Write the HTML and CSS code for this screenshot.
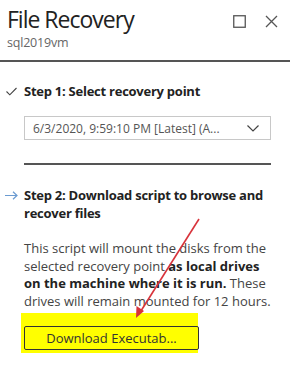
FILE: index.html
```html
<!DOCTYPE html>
<html>
<head>
  <title>File Recovery</title>
  <link rel="stylesheet" href="styles.css">
</head>
<body>
  <div class="blade-header">
    <div class="titles">
      <h1>File Recovery</h1>
      <div class="subtitle">sql2019vm</div>
    </div>
    <div class="blade-actions">
      <svg width="13" height="13" viewBox="0 0 13 13"><rect x="0.75" y="0.75" width="11.5" height="11.5" fill="none" stroke="#555" stroke-width="1.3"/></svg>
      <svg width="13" height="13" viewBox="0 0 13 13"><path d="M1 1 L12 12 M12 1 L1 12" stroke="#555" stroke-width="1.3" fill="none"/></svg>
    </div>
  </div>

  <div class="step step-done">
    <div class="step-title">
      <svg class="step-icon" width="11" height="9" viewBox="0 0 11 9"><path d="M0.5 4.5 L3.8 7.8 L10.5 1" stroke="#444" stroke-width="1.1" fill="none"/></svg>
      <span>Step 1: Select recovery point</span>
    </div>
    <div class="step-body">
      <div class="dropdown">
        <span>6/3/2020, 9:59:10 PM [Latest] (A...</span>
        <svg width="12" height="7" viewBox="0 0 12 7"><path d="M0.5 0.5 L6 6 L11.5 0.5" stroke="#444" stroke-width="1.2" fill="none"/></svg>
      </div>
      <div class="divider"></div>
    </div>
  </div>

  <div class="step step-current">
    <div class="step-title">
      <svg class="step-icon" width="13" height="9" viewBox="0 0 13 9"><path d="M0 4.5 H12 M8 0.8 L12 4.5 L8 8.2" stroke="#6b9bd1" stroke-width="1.2" fill="none"/></svg>
      <span>Step 2: Download script to browse and recover files</span>
    </div>
    <div class="step-body">
      <p class="info">This script will mount the disks from the selected recovery point <b>as local drives</b> <b>on the machine where it is run.</b> These drives will remain mounted for 12 hours.</p>
      <div class="highlight">
        <button class="btn">Download Executab...</button>
      </div>
    </div>
  </div>

  <svg class="callout-arrow" width="290" height="367" viewBox="0 0 290 367">
    <path d="M199 219 L139 314" stroke="#d8333b" stroke-width="1.6" fill="none"/>
    <path d="M136 318 L136.5 306 L144 311 Z" fill="#d8333b"/>
  </svg>
</body>
</html>
```

FILE: styles.css
```css
body {
  margin: 0;
  width: 290px;
  font-family: "Open Sans", "Noto Sans", sans-serif;
  color: #333;
  background: #fff;
  position: relative;
}

.blade-header {
  display: flex;
  justify-content: space-between;
  padding: 3px 12px 0 7px;
  height: 57px;
  border-bottom: 2px solid #555;
}

.blade-header h1 {
  margin: 0;
  font-size: 23px;
  font-weight: 400;
  letter-spacing: -1px;
  line-height: 32px;
  color: #222;
}

.subtitle {
  font-size: 12.5px;
  color: #666;
  line-height: 14px;
  margin-top: 1px;
  letter-spacing: -0.2px;
}

.blade-actions {
  display: flex;
  gap: 19px;
  padding-top: 12px;
}

.step {
  padding: 0 19px 0 24px;
}

.step-title {
  position: relative;
  font-weight: 700;
  font-size: 13px;
  letter-spacing: -0.25px;
  line-height: 18px;
  color: #222;
}

.step-icon {
  position: absolute;
  left: -18px;
  top: 5px;
}

.step-current .step-icon {
  left: -19px;
}

.step-done {
  padding-top: 20px;
}

.dropdown {
  margin-top: 16px;
  height: 22px;
  border: 1px solid #c8c8c8;
  display: flex;
  align-items: center;
  justify-content: space-between;
  padding: 0 11px 0 8px;
  font-size: 12px;
  color: #555;
}

.divider {
  margin-top: 23px;
  height: 2px;
  background: #555;
}

.step-current {
  padding-top: 21px;
}

.info {
  margin: 18px 0 0;
  font-size: 13px;
  line-height: 17.5px;
  color: #444;
}

.info b {
  color: #222;
}

.highlight {
  margin: 3px 0 0 -3px;
  width: 174px;
  padding: 13px 0 3px 3px;
  background: #ffff00;
}

.btn {
  display: block;
  width: 175px;
  height: 24px;
  border: 1.5px solid #333;
  border-radius: 2px;
  background: transparent;
  font-family: inherit;
  font-size: 13px;
  color: #333;
  padding: 0;
}

.callout-arrow {
  position: absolute;
  left: 0;
  top: 0;
  pointer-events: none;
}
```
